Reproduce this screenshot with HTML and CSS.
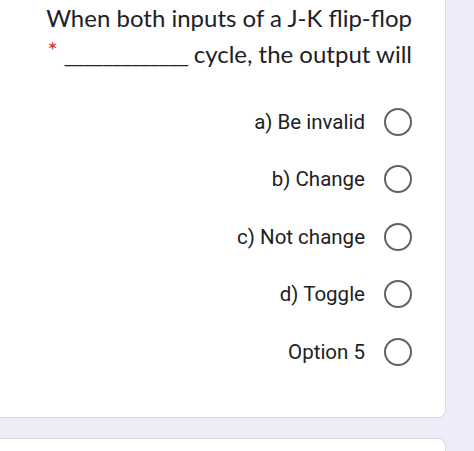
FILE: index.html
```html
<!DOCTYPE html>
<html lang="en">
<head>
  <meta charset="UTF-8" />
  <title>Form question</title>
  <link rel="stylesheet" href="styles.css">
</head>
<body>

<div class="form">
  <div class="card question">
    <div class="title">When both inputs of a J-K <span class="nowrap">flip-flop</span> <span class="blank">_____________</span> cycle, the output will <span class="required">*</span></div>
    <div class="options">
      <label class="option"><span>a) Be invalid</span><input type="radio" name="q1"></label>
      <label class="option"><span>b) Change</span><input type="radio" name="q1"></label>
      <label class="option"><span>c) Not change</span><input type="radio" name="q1"></label>
      <label class="option"><span>d) Toggle</span><input type="radio" name="q1"></label>
      <label class="option"><span>Option 5</span><input type="radio" name="q1"></label>
    </div>
  </div>
  <div class="card next"></div>
</div>

</body>
</html>
```

FILE: styles.css
```css
html, body { margin: 0; padding: 0; height: 100%; background-color: #efebf8; overflow: hidden; }
body { color: #202124; }
.form { padding-right: 28px; display: flex; flex-direction: column; gap: 20px; }
.card { background-color: #fff; border-right: 1px solid #dadce0; border-bottom: 1px solid #dadce0; }
.question { border-radius: 0 0 8px 0; padding: 0 33px 36px 0; }
.next { height: 60px; border-top: 1px solid #dadce0; border-bottom: none; border-radius: 0 8px 0 0; }
.title { direction: rtl; text-align: right; font-family: Lato, sans-serif; font-size: 24px; line-height: 36px; padding-left: 30px; }
.nowrap { white-space: nowrap; }
.blank { letter-spacing: -1.5px; }
.required { color: #d93025; font-size: 24px; line-height: 1; vertical-align: 4px; padding-left: 8px; }
.options { margin-top: 21px; display: flex; flex-direction: column; }
.option { display: flex; justify-content: flex-end; align-items: center; gap: 19px; height: 57.5px; font-family: Roboto, sans-serif; font-size: 20.5px; cursor: pointer; }
.option input { appearance: none; -webkit-appearance: none; margin: 0; width: 28px; height: 28px; border: 2.5px solid #5f6368; border-radius: 50%; box-sizing: border-box; cursor: pointer; }
```
